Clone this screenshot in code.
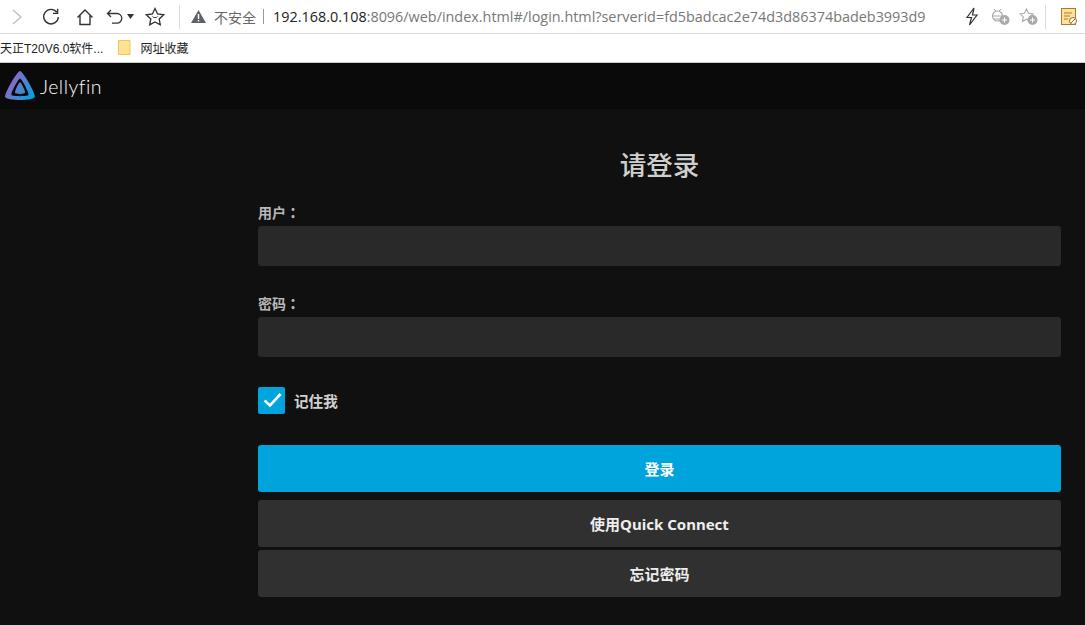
<div class="page">
  <div class="toolbar">
    <div class="nav">
      <svg class="back" width="14" height="18" viewBox="0 0 14 18"><path d="M3 2l8 7-8 7" fill="none" stroke="#bdbdbd" stroke-width="1.3"/></svg>
      <svg class="reload" width="20" height="20" viewBox="0 0 20 20"><path d="M15.8 5.200A7.300 7.300 0 1 0 17.300 10" fill="none" stroke="#333" stroke-width="1.400"/><path d="M16.600 1.800v4.600H12" fill="none" stroke="#333" stroke-width="1.400"/></svg>
      <svg class="home" width="18" height="18" viewBox="0 0 18 18"><path d="M1.500 9.500 9 2l7.500 7.500M4 7.500V16.500h10V7.500" fill="none" stroke="#333" stroke-width="1.400"/></svg>
      <svg class="undo" width="18" height="16" viewBox="0 0 18 16"><path d="M5 1 1.500 4.500 5 8M1.500 4.500H11a4.800 4.800 0 0 1 0 9.600H6" fill="none" stroke="#333" stroke-width="1.300"/></svg>
      <svg class="caret" width="7" height="5" viewBox="0 0 7 5"><path d="M0 0h7L3.500 5z" fill="#333"/></svg>
      <svg class="star" width="20" height="19" viewBox="0 0 20 19"><path d="M10 1.500l2.600 5.500 6 .8-4.400 4.100 1.100 5.900L10 14.900l-5.300 2.900 1.100-5.900L1.400 7.800l6-.8z" fill="none" stroke="#333" stroke-width="1.300"/><path d="M7.500 9.500c1 1.600 4 1.600 5 0" fill="none" stroke="#333" stroke-width="1"/></svg>
    </div>
    <span class="sep"></span>
    <svg class="warn" width="15" height="13" viewBox="0 0 15 13"><path d="M7.500 0 15 13H0z" fill="#5f6368"/><path d="M6.800 4h1.400v5H6.800zM6.800 10h1.400v1.500H6.800z" fill="#fff"/></svg>
    <span class="insecure">不安全</span>
    <span class="bar"></span>
    <span class="url"><span class="host">192.168.0.108</span>:8096/web/index.html#/login.html?serverid=fd5badcac2e74d3d86374badeb3993d9</span>
    <div class="tools">
      <svg class="t-bolt" width="14" height="19" viewBox="0 0 14 19"><path d="M9 1 2 10.500h4.500L4.500 18 12 8H7.500z" fill="none" stroke="#333" stroke-width="1.200"/></svg>
      <svg class="t-bee" width="20" height="18" viewBox="0 0 20 18"><circle cx="6.500" cy="8" r="5" fill="none" stroke="#aaa" stroke-width="1.200"/><path d="M3 1l2 2M10 1 8 3M2 8h9M3 11h7" stroke="#aaa"/><circle cx="13.500" cy="12" r="5" fill="#aaa"/><path d="M11 12h5M13.500 9.500v5" stroke="#fff"/></svg>
      <svg class="t-star" width="20" height="18" viewBox="0 0 20 18"><path d="M7.500 1l2 4.200 4.500.6-3.300 3.100.8 4.500-4-2.200-4 2.200.8-4.500L1 5.800l4.500-.6z" fill="none" stroke="#aaa" stroke-width="1.100"/><circle cx="13.500" cy="12" r="5" fill="#aaa"/><path d="M11 12h5M13.500 9.500v5" stroke="#fff"/></svg>
      <span class="sep2"></span>
      <svg class="t-note" width="17" height="18" viewBox="0 0 17 18"><rect x=".5" y=".5" width="14" height="16" fill="#fde29a" stroke="#b8742c"/><path d="M3 5h8M3 8h6M3 11h4" stroke="#b8742c"/><circle cx="12" cy="13" r="3.500" fill="#fff" stroke="#a06a20"/><path d="M10 15l4-4" stroke="#a06a20"/></svg>
    </div>
  </div>

  <div class="bookmarks">
    <span class="bm">天正T20V6.0软件...</span>
    <svg class="folder" width="13" height="15" viewBox="0 0 13 15"><path d="M.5.500h11.500v14H.5z" fill="#fde28f" stroke="#e8c860"/></svg>
    <span class="bm">网址收藏</span>
  </div>

  <header class="head">
    <svg class="logo" width="32" height="32" viewBox="0 0 32 32">
      <defs>
        <linearGradient id="jf" gradientUnits="userSpaceOnUse" x1="2" y1="8" x2="30" y2="26">
          <stop offset="0" stop-color="#aa5cc3"/>
          <stop offset="1" stop-color="#00a4dc"/>
        </linearGradient>
      </defs>
      <path fill-rule="evenodd" fill="url(#jf)" d="M16 1C13 1 0 24 1.200 27 2.600 31 29.400 31 30.800 27 32 24 19 1 16 1zM16 8.500C14.500 8.500 6.500 23 7.500 25 8.500 26.500 23.500 26.500 24.500 25 25.500 23 17.500 8.500 16 8.500z"/>
      <path fill="url(#jf)" d="M16 12C15 12 10.500 21 11 22.800 11.500 24.300 20.500 24.300 21 22.800 21.500 21 17 12 16 12z"/>
    </svg>
    <span class="brand">Jellyfin</span>
  </header>

  <main class="main">
    <form class="form" onsubmit={(e) => e.preventDefault()}>
      <h1>请登录</h1>
      <label class="field first">
        <span>用户<b class="colon">：</b></span>
        <input type="text" />
      </label>
      <label class="field second">
        <span>密码<b class="colon">：</b></span>
        <input type="password" />
      </label>
      <label class="remember">
        <span class="box">
          <svg width="27" height="27" viewBox="0 0 27 27"><path d="M6.500 13.500 12 18.500 22.500 7" fill="none" stroke="#fff" stroke-width="2.600"/></svg>
        </span>
        <span class="rtext">记住我</span>
      </label>
      <button class="btn primary" type="submit">登录</button>
      <button class="btn" type="button">使用Quick Connect</button>
      <button class="btn" type="button">忘记密码</button>
    </form>
  </main>
</div>

<style>
  :global(body) {
    margin: 0;
    background: #101010;
  }
  .page {
    width: 1085px;
    height: 625px;
    overflow: hidden;
    display: flex;
    flex-direction: column;
    font-family: "Noto Sans", "Noto Sans CJK SC", sans-serif;
  }
  .toolbar {
    height: 34px;
    box-sizing: border-box;
    border-bottom: 1px solid #dcdcdc;
    background: #fff;
    display: flex;
    align-items: center;
    flex: none;
    font-family: "Liberation Sans", "Noto Sans CJK SC", sans-serif;
  }
  .nav {
    display: flex;
    align-items: center;
    padding-left: 10px;
    width: 160px;
    flex: none;
    margin-right: 9px;
  }
  .reload { margin-left: 17px; }
  .home { margin-left: 15px; }
  .undo { margin-left: 12px; }
  .caret { margin-left: 3px; }
  .star { margin-left: 11px; }
  .sep {
    width: 1px;
    height: 24px;
    background: #dcdcdc;
  }
  .warn { margin-left: 11px; }
  .insecure {
    margin-left: 8px;
    font-size: 14px;
    color: #666;
  }
  .bar {
    width: 1px;
    height: 15px;
    background: #999;
    margin-left: 7px;
  }
  .url {
    margin-left: 9px;
    font-family: "Open Sans", "Liberation Sans", sans-serif;
    font-size: 14.4px;
    color: #777;
    white-space: nowrap;
  }
  .host { color: #222; }
  .tools {
    margin-left: auto;
    display: flex;
    align-items: center;
    padding-right: 7px;
  }
  .t-bee { margin-left: 12px; }
  .t-star { margin-left: 8px; }
  .sep2 {
    width: 1px;
    height: 24px;
    background: #dcdcdc;
    margin-left: 6px;
    margin-right: 15px;
  }
  .bookmarks {
    height: 29px;
    box-sizing: border-box;
    background: #fff;
    display: flex;
    align-items: center;
    flex: none;
    font-family: "Liberation Sans", "Noto Sans CJK SC", sans-serif;
    border-bottom: 1px solid #ccc;
    padding-bottom: 2px;
  }
  .bm {
    font-size: 12px;
    color: #222;
    white-space: nowrap;
  }
  .folder { margin-left: 15px; margin-right: 9px; }
  .head {
    height: 46px;
    background: #0a0a0a;
    flex: none;
    display: flex;
    align-items: center;
    padding-left: 4px;
  }
  .logo { flex: none; }
  .brand {
    margin-left: 4px;
    font-family: "Lato", sans-serif;
    font-weight: 300;
    font-size: 19.500px;
    letter-spacing: .5px;
    color: #fff;
  }
  .main {
    flex: 1;
    background: #101010;
    padding-left: 258px;
  }
  .form {
    width: 803px;
  }
  h1 {
    margin: 38px 0 0;
    text-align: center;
    font-size: 26.500px;
    line-height: 36px;
    font-weight: 500;
    color: #cfcfcf;
  }
  .field {
    display: block;
  }
  .field span {
    display: block;
    height: 18px;
    font-size: 14px;
    font-weight: 700;
    line-height: 18px;
    color: #b8b8b8;
  }
  .colon {
    font-family: "Noto Sans CJK TC", sans-serif;
  }
  .first { margin-top: 20px; }
  .second { margin-top: 28px; }
  input {
    display: block;
    width: 100%;
    height: 40px;
    box-sizing: border-box;
    background: #292929;
    border: 0;
    border-radius: 3px;
    margin-top: 5px;
    padding: 0;
  }
  .remember {
    display: flex;
    align-items: center;
    gap: 9px;
    margin-top: 30px;
    margin-bottom: 31px;
  }
  .box {
    width: 27px;
    height: 27px;
    background: #00a4dc;
    border-radius: 2px;
    display: flex;
  }
  .rtext {
    font-size: 14.600px;
    font-weight: 700;
    color: #d0d0d0;
  }
  .btn {
    display: block;
    width: 100%;
    height: 47px;
    margin: 0 0 3px;
    border: 0;
    border-radius: 3px;
    background: #303030;
    color: #eee;
    font-family: "Noto Sans", "Noto Sans CJK SC", sans-serif;
    font-size: 15px;
    font-weight: 700;
    padding: 0;
  }
  .primary {
    background: #00a4dc;
    color: #fff;
    margin-bottom: 8px;
  }
</style>
